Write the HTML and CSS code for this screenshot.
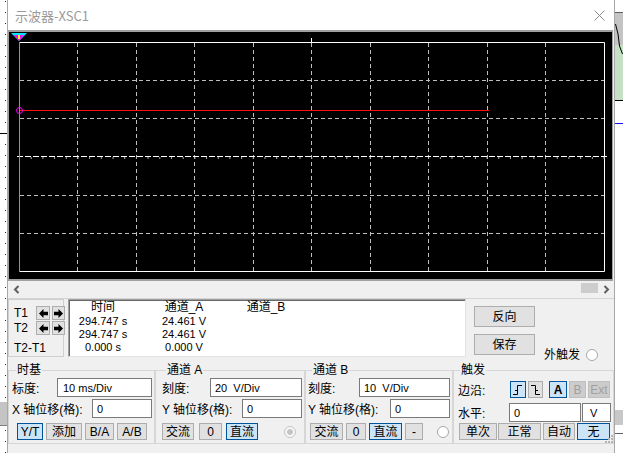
FILE: index.html
```html
<!DOCTYPE html>
<html lang="zh-CN">
<head>
<meta charset="utf-8">
<title>示波器-XSC1</title>
<link rel="stylesheet" href="styles.css">
</head>
<body>
<div class="screen">
  <div class="strip strip-left">
    <svg width="7" height="453" viewBox="0 0 7 453">
      <defs>
        <pattern id="gridDots" width="7" height="11" patternUnits="userSpaceOnUse">
          <rect x="5" y="1" width="1" height="1" fill="#222"/>
        </pattern>
      </defs>
      <rect width="7" height="453" fill="url(#gridDots)"/>
      <rect x="0" y="133" width="7" height="1" fill="#000"/>
      <rect x="0" y="402" width="7" height="23" fill="#c4c4c4"/>
      <rect x="0" y="425" width="7" height="1" fill="#808080"/>
    </svg>
  </div>

  <div class="window">
    <div class="titlebar">
      <span class="title">示波器-XSC1</span>
      <svg class="close" width="11" height="11" viewBox="0 0 11 11">
        <path d="M0.5 0.5 L10.5 10.5 M10.5 0.5 L0.5 10.5" stroke="#8c8c8c" stroke-width="1" fill="none"/>
      </svg>
    </div>

    <div class="scope">
      <svg width="603" height="247" viewBox="0 0 603 247">
        <g stroke="#bdbdbd" stroke-width="1" stroke-dasharray="4 3" fill="none">
          <path d="M68.5 11V239 M127.5 11V239 M185.5 11V239 M244.5 11V239 M302.5 11V239 M361.5 11V239 M419.5 11V239 M478.5 11V239 M536.5 11V239"/>
          <path d="M11 48.5H595 M11 86.5H595 M11 163.5H595 M11 201.5H595"/>
        </g>
        <path d="M10.5 10.5 H595.5 V239.5 H10.5" stroke="#fff" stroke-width="1" fill="none"/>
        <line x1="8" y1="124.5" x2="598" y2="124.5" stroke="#fff" stroke-width="1" stroke-dasharray="6 2"/>
        <line x1="10" y1="126" x2="597" y2="126" stroke="#a8a8a8" stroke-width="2" stroke-dasharray="1 10.69"/>
        <line x1="302.5" y1="6" x2="302.5" y2="10" stroke="#fff"/>
        <line x1="10.5" y1="10" x2="10.5" y2="240" stroke="#22e022" stroke-width="1"/>
        <line x1="11" y1="78.5" x2="480" y2="78.5" stroke="#ff1010" stroke-width="1"/>
        <circle cx="10.5" cy="78.5" r="3" fill="none" stroke="#ff00ff" stroke-width="1"/>
        <polygon points="2,1 18,1 10,9" fill="#00e5ff"/>
        <polygon points="5,3 15,3 10,9" fill="#ff00ff"/>
        <rect x="9" y="3" width="2" height="4" fill="#ffff00"/>
      </svg>
    </div>

    <div class="hscroll">
      <svg class="chev chev-left" width="7" height="9" viewBox="0 0 7 9">
        <polyline points="5.5,1 2,4.5 5.5,8" fill="none" stroke="#5e5e5e" stroke-width="2"/>
      </svg>
      <div class="thumb"></div>
      <svg class="chev chev-right" width="7" height="9" viewBox="0 0 7 9">
        <polyline points="1.5,1 5,4.5 1.5,8" fill="none" stroke="#5e5e5e" stroke-width="2"/>
      </svg>
    </div>

    <div class="readout">
      <div class="cursor-box">
        <span class="t-label">T1</span>
        <button class="arrow-btn"><svg width="9" height="9" viewBox="0 0 10 10"><polygon points="0,5 5,0 5,3 10,3 10,7 5,7 5,10" fill="#000"/></svg></button>
        <button class="arrow-btn"><svg width="9" height="9" viewBox="0 0 10 10"><polygon points="10,5 5,0 5,3 0,3 0,7 5,7 5,10" fill="#000"/></svg></button>
        <span class="t-label">T2</span>
        <button class="arrow-btn"><svg width="9" height="9" viewBox="0 0 10 10"><polygon points="0,5 5,0 5,3 10,3 10,7 5,7 5,10" fill="#000"/></svg></button>
        <button class="arrow-btn"><svg width="9" height="9" viewBox="0 0 10 10"><polygon points="10,5 5,0 5,3 0,3 0,7 5,7 5,10" fill="#000"/></svg></button>
        <span class="t-label t-diff">T2-T1</span>
      </div>

      <div class="data">
        <span class="hd">时间</span><span class="hd">通道_A</span><span class="hd">通道_B</span>
        <span>294.747 s</span><span>24.461 V</span><span></span>
        <span>294.747 s</span><span>24.461 V</span><span></span>
        <span>0.000 s</span><span>0.000 V</span><span></span>
      </div>

      <div class="side-btns">
        <button class="btn side">反向</button>
        <button class="btn side">保存</button>
      </div>

      <div class="ext-trig">
        <span>外触发</span>
        <span class="radio"></span>
      </div>
    </div>

    <div class="controls">
      <fieldset class="grp grp-time">
        <legend>时基</legend>
        <div class="gbody">
          <div class="row r1"><span>标度:</span><span class="field w95">10 ms/Div</span></div>
          <div class="row r2"><span>X 轴位移(格):</span><span class="field w60">0</span></div>
          <div class="row r3">
            <button class="btn sel" style="width:26px">Y/T</button>
            <button class="btn" style="width:36px">添加</button>
            <button class="btn" style="width:29px">B/A</button>
            <button class="btn" style="width:30px">A/B</button>
          </div>
        </div>
      </fieldset>

      <fieldset class="grp grp-cha">
        <legend>通道 A</legend>
        <div class="gbody">
          <div class="row r1"><span>刻度:</span><span class="field w92">20  V/Div</span></div>
          <div class="row r2"><span>Y 轴位移(格):</span><span class="field w60">0</span></div>
          <div class="row r3">
            <button class="btn" style="width:32px">交流</button>
            <button class="btn" style="width:23px;margin-left:5px">0</button>
            <button class="btn sel" style="width:32px;margin-left:4px">直流</button>
            <span class="radio dis" style="margin-left:26px"></span>
          </div>
        </div>
      </fieldset>

      <fieldset class="grp grp-chb">
        <legend>通道 B</legend>
        <div class="gbody">
          <div class="row r1"><span>刻度:</span><span class="field w91">10  V/Div</span></div>
          <div class="row r2"><span>Y 轴位移(格):</span><span class="field w60">0</span></div>
          <div class="row r3">
            <button class="btn" style="width:33px">交流</button>
            <button class="btn" style="width:20px;margin-left:3px">0</button>
            <button class="btn sel" style="width:33px;margin-left:3px">直流</button>
            <button class="btn" style="width:18px;margin-left:3px">-</button>
            <span class="radio" style="margin-left:14px"></span>
          </div>
        </div>
      </fieldset>

      <fieldset class="grp grp-trig">
        <legend>触发</legend>
        <div class="gbody">
          <div class="row t1">
            <span class="tlabel">边沿:</span>
            <button class="btn sel" style="width:16px"><svg width="12" height="12" viewBox="0 0 12 12"><path d="M1 10.5H5.5V1.5H10 M3 6.5H5.5" fill="none" stroke="#000" stroke-width="1"/></svg></button>
            <button class="btn" style="width:15px;margin-left:2px"><svg width="12" height="12" viewBox="0 0 12 12"><path d="M1 1.5H5.5V10.5H10 M5.5 6.5H8" fill="none" stroke="#000" stroke-width="1"/></svg></button>
            <button class="btn sel bold" style="width:18px;margin-left:6px">A</button>
            <button class="btn dis" style="width:17px;margin-left:2px">B</button>
            <button class="btn dis" style="width:22px;margin-left:2px">Ext</button>
          </div>
          <div class="row t2">
            <span class="tlabel t2l">水平:</span>
            <span class="field" style="width:72px">0</span>
            <span class="field vbox" style="width:29px;margin-left:1px">V</span>
          </div>
          <div class="row t3">
            <button class="btn" style="width:38px">单次</button>
            <button class="btn" style="width:43px;margin-left:1px">正常</button>
            <button class="btn" style="width:32px;margin-left:2px">自动</button>
            <button class="btn sel" style="width:33px;margin-left:2px">无</button>
          </div>
        </div>
      </fieldset>
    </div>

    <svg class="grip" width="8" height="8" viewBox="0 0 8 8">
      <g fill="#b4b4b4">
        <rect x="6" y="0" width="2" height="2"/>
        <rect x="3" y="3" width="2" height="2"/><rect x="6" y="3" width="2" height="2"/>
        <rect x="0" y="6" width="2" height="2"/><rect x="3" y="6" width="2" height="2"/><rect x="6" y="6" width="2" height="2"/>
      </g>
    </svg>
  </div>

  <div class="strip strip-right">
    <svg width="8" height="453" viewBox="0 0 8 453">
      <rect x="0" y="12" width="8" height="33" fill="#c4c4c4"/>
      <rect x="0" y="45" width="8" height="55" fill="#c6e0c6"/>
      <rect x="0" y="12" width="8" height="1" fill="#606060"/>
      <rect x="0" y="100" width="8" height="1" fill="#000"/>
      <polyline points="0.5,24 3,34 4.5,46 7.5,54" fill="none" stroke="#000" stroke-width="1"/>
      <rect x="0" y="123" width="8" height="1" fill="#1010ff"/>
      <rect x="0" y="410" width="8" height="15" fill="#c8c8c8"/>
      <rect x="0" y="433" width="8" height="1" fill="#606060"/>
    </svg>
  </div>
</div>
</body>
</html>
```

FILE: styles.css
```css
* { box-sizing: border-box; }

html, body {
  margin: 0;
  padding: 0;
}

body {
  width: 623px;
  height: 453px;
  overflow: hidden;
  background: #fff;
  font-family: "Liberation Sans", "Noto Sans CJK SC", sans-serif;
  font-size: 12px;
  color: #000;
}

.screen {
  display: flex;
  width: 623px;
  height: 453px;
}

.strip svg { display: block; }
.strip-left { width: 7px; flex: none; }
.strip-right { width: 8px; flex: none; }

.window {
  position: relative;
  width: 608px;
  height: 453px;
  flex: none;
  border-left: 1px solid #a8a8a8;
  border-right: 1px solid #a8a8a8;
  background: #f0f0f0;
  display: flex;
  flex-direction: column;
}

/* title bar */
.titlebar {
  height: 30px;
  flex: none;
  background: #fff;
  display: flex;
  align-items: center;
  padding: 1px 9px 0 7px;
}
.title {
  font-family: "Noto Sans CJK SC", sans-serif;
  font-size: 13px;
  color: #9a9a9a;
  line-height: 16px;
}
.close { margin-left: auto; display: block; }

/* oscilloscope screen */
.scope {
  width: 605px;
  height: 251px;
  flex: none;
  border-style: solid;
  border-color: #a0a0a0;
  border-width: 2px 1px 2px 1px;
  background: #000;
}
.scope svg { display: block; }

/* horizontal scroll bar */
.hscroll {
  height: 18px;
  flex: none;
  display: flex;
  align-items: flex-start;
  padding: 0 4px 0 5px;
  border-bottom: 1px solid #d4d4d4;
}
.chev { display: block; margin-top: 4px; }
.thumb {
  margin-left: auto;
  margin-top: 2px;
  width: 17px;
  height: 10px;
  background: #cdcdcd;
}
.chev-right { margin-left: 5px; }

/* readout area */
.readout {
  height: 64px;
  flex: none;
  display: flex;
  align-items: flex-start;
}

.cursor-box {
  width: 56px;
  height: 58px;
  border: 1px solid #cfcfcf;
  display: grid;
  grid-template-columns: 20px 14px 13px;
  grid-template-rows: 14px 14px 19px;
  column-gap: 2px;
  row-gap: 1px;
  padding: 6px 0 0 5px;
  align-items: center;
}
.t-label { line-height: 14px; font-size: 12px; }
.t-diff { grid-column: 1 / span 3; align-self: end; }

.arrow-btn {
  height: 14px;
  padding: 0;
  border: 1px solid #adadad;
  background: #e1e1e1;
  display: flex;
  align-items: center;
  justify-content: center;
}
.arrow-btn svg { display: block; }

.data {
  margin-left: 4px;
  width: 398px;
  height: 58px;
  background: #fff;
  border: 1px solid;
  border-color: #a0a0a0 #e3e3e3 #e3e3e3 #a0a0a0;
  box-shadow: inset 1px 1px 0 #696969;
  display: grid;
  grid-template-columns: 66px 96px 68px;
  grid-template-rows: 13px 15px 11px 15px;
  padding: 1px 0 0 1px;
  align-items: center;
  justify-items: center;
  font-size: 11px;
  line-height: 11px;
}
.data .hd { font-size: 12px; line-height: 13px; }

.side-btns {
  margin-left: 8px;
  padding-top: 7px;
  display: flex;
  flex-direction: column;
  gap: 7px;
}

.btn {
  font: inherit;
  font-size: 12px;
  height: 100%;
  padding: 0;
  border: 1px solid #adadad;
  background: #e1e1e1;
  color: #000;
  display: flex;
  align-items: center;
  justify-content: center;
  line-height: 1;
  white-space: nowrap;
}
.btn svg { display: block; }
.btn.side { width: 61px; height: 21px; }
.btn.sel { background: #cce4f7; border-color: #005499; }
.btn.dis { background: #cccccc; border-color: #bfbfbf; color: #a0a0a0; }
.btn.bold { font-weight: bold; }

.ext-trig {
  margin-left: 9px;
  margin-top: 49px;
  display: flex;
  align-items: center;
  line-height: 14px;
}

.radio {
  display: block;
  flex: none;
  width: 12px;
  height: 12px;
  border-radius: 50%;
  border: 1px solid #a8a8a8;
  background: #fff;
}
.ext-trig .radio { margin-left: 6px; }
.radio.dis {
  border-color: #c4c4c4;
  background: radial-gradient(circle at center, #c4c4c4 0 2.6px, #f7f7f7 3.2px);
}

/* control groups */
.controls {
  height: 81px;
  flex: none;
  display: flex;
}

.grp {
  margin: 0;
  padding: 0;
  min-width: 0;
  height: 81px;
  border: 1px solid #d6d6d6;
}
.grp legend {
  padding: 0 1px;
  font-size: 12px;
  line-height: 14px;
}
.grp-time { width: 147px; }
.grp-time legend { margin-left: 7px; }
.grp-cha { width: 150px; }
.grp-cha legend { margin-left: 10px; }
.grp-chb { width: 148px; }
.grp-chb legend { margin-left: 6px; }
.grp-trig { width: 161px; }
.grp-trig legend { margin-left: 6px; }

.gbody { padding: 0 2px 0 3px; }
.grp-cha .gbody { padding-left: 6px; }
.grp-chb .gbody { padding-left: 2px; }
.grp-trig .gbody { padding-left: 4px; }

.row {
  display: flex;
  align-items: center;
  height: 19px;
  white-space: nowrap;
}
.r1 { margin-top: 1px; }
.r2 { margin-top: 2px; }
.r1 .field, .r2 .field { margin-left: auto; }
.r3 { margin-top: 5px; height: 17px; }
.grp-time .r3 { padding-left: 5px; gap: 3px; }
.grp-chb .r3 { padding-left: 2px; }

.t1 { margin-top: 4px; height: 17px; }
.t2 { margin-top: 5px; }
.t3 { margin-top: 1px; height: 17px; padding-left: 1px; }
.tlabel { width: 52px; flex: none; }
.t2l { width: 51px; }

.field {
  flex: none;
  height: 19px;
  background: #fff;
  border: 1px solid #7a7a7a;
  font-size: 11px;
  padding-left: 4px;
  display: flex;
  align-items: center;
  white-space: pre;
}
.vbox { padding-left: 7px; }
.w95 { width: 95px; padding-left: 5px; }
.w92 { width: 92px; }
.w91 { width: 91px; }
.w60 { width: 60px; }

.grip {
  position: absolute;
  right: 1px;
  bottom: 10px;
  display: block;
}
```
